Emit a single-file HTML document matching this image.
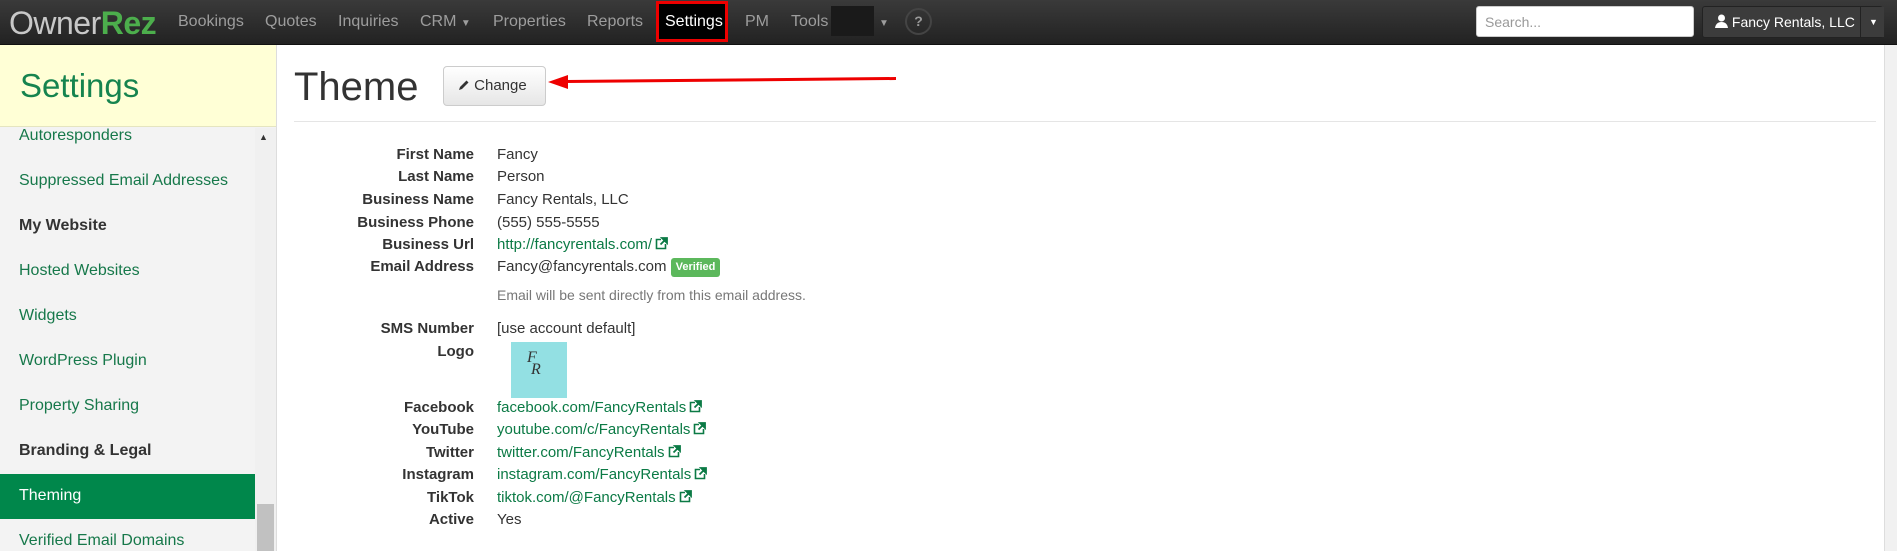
<!DOCTYPE html>
<html><head><meta charset="utf-8"><style>
*{box-sizing:border-box;margin:0;padding:0}
body{width:1897px;height:551px;overflow:hidden;font-family:"Liberation Sans",Arial,sans-serif;background:#fff;position:relative;color:#333}
.nav{position:absolute;left:0;top:0;width:1897px;height:45px;background:linear-gradient(#3a3a3a,#222);border-bottom:1px solid #111}
.abs{position:absolute}
.logo{left:9px;top:6px;font-size:32px;line-height:34px;color:#c8c8c8;font-weight:300;letter-spacing:-0.5px}
.logo b{color:#4cae4c;font-weight:700}
.ni{top:12px;font-size:16px;color:#9d9d9d;line-height:20px}
.side{left:0;top:45px;width:277px;height:506px;background:#f3f3f3;border-right:1px solid #ddd}
.shead{left:0;top:45px;width:276px;height:82px;background:#ffffd6;border-bottom:1px solid #e5e5c0}
.si{left:19px;font-size:16px;color:#16784a;line-height:20px}
.sb{font-weight:bold;color:#333}
.lab{right:1423px;font-size:15px;font-weight:bold;color:#333;line-height:20px;text-align:right;white-space:nowrap}
.val{left:497px;font-size:15px;color:#333;line-height:20px;white-space:nowrap}
.lnk{color:#0b7a45}
.ext{display:inline-block;width:13px;height:13px;vertical-align:-1px;margin-left:3px}
</style></head><body>
<div class="nav"></div>
<div class="abs logo">Owner<b>Rez</b></div>
<div class="abs ni" style="left:178px">Bookings</div>
<div class="abs ni" style="left:265px">Quotes</div>
<div class="abs ni" style="left:338px">Inquiries</div>
<div class="abs ni" style="left:420px">CRM <span style="font-size:10px">▼</span></div>
<div class="abs ni" style="left:493px">Properties</div>
<div class="abs ni" style="left:587px">Reports</div>
<div class="abs" style="left:656px;top:1px;width:72px;height:41px;background:#000;border:3px solid #e00"></div>
<div class="abs ni" style="left:665px;color:#fff">Settings</div>
<div class="abs ni" style="left:745px">PM</div>
<div class="abs ni" style="left:791px">Tools</div>
<div class="abs" style="left:831px;top:6px;width:43px;height:30px;background:#1a1a1a"></div>
<div class="abs ni" style="left:879px;font-size:10px;top:14px">▼</div>
<div class="abs" style="left:905px;top:8px;width:27px;height:27px;border:2px solid #444;border-radius:50%;color:#999;font-size:14px;font-weight:bold;text-align:center;line-height:23px">?</div>
<div class="abs" style="left:1476px;top:6px;width:218px;height:31px;background:#fff;border-radius:3px;border:1px solid #ccc;font-size:14px;color:#999;padding:7px 8px">Search...</div>
<div class="abs" style="left:1702px;top:6px;width:181px;height:32px;background:#3c3c3c;border:1px solid #222;border-radius:3px;color:#fff;font-size:14px;line-height:30px;padding-left:12px;white-space:nowrap">
<svg width="13" height="14" viewBox="0 0 13 14" style="vertical-align:-1px"><circle cx="6.5" cy="4" r="3.5" fill="#fff"/><path d="M0 14 Q1 8 6.5 8 Q12 8 13 14Z" fill="#fff"/></svg> Fancy Rentals, LLC
<div class="abs" style="left:157px;top:0;width:24px;height:30px;background:#3c3c3c;border-left:1px solid #222"></div>
<div class="abs" style="left:166px;top:0;font-size:9px">▼</div></div>
<div class="abs" style="left:1884px;top:45px;width:13px;height:506px;background:#f1f1f1;border-left:1px solid #ddd"></div>

<div class="abs side"></div>
<div class="abs shead"></div>
<div class="abs" style="left:20px;top:66px;font-size:33px;color:#16844f;line-height:40px">Settings</div>
<div class="abs" style="left:255px;top:128px;width:21px;height:423px;background:#f0f0f0"></div>
<div class="abs" style="left:259px;top:132px;font-size:9px;color:#333">▲</div>
<div class="abs" style="left:257px;top:504px;width:17px;height:47px;background:#c1c1c1"></div>
<div class="abs si" style="top:126px">Autoresponders</div>
<div class="abs si" style="top:171px">Suppressed Email Addresses</div>
<div class="abs si sb" style="top:216px">My Website</div>
<div class="abs si" style="top:261px">Hosted Websites</div>
<div class="abs si" style="top:306px">Widgets</div>
<div class="abs si" style="top:351px">WordPress Plugin</div>
<div class="abs si" style="top:396px">Property Sharing</div>
<div class="abs si sb" style="top:441px">Branding &amp; Legal</div>
<div class="abs" style="left:0;top:474px;width:255px;height:45px;background:#00874b"></div>
<div class="abs si" style="top:486px;color:#fff">Theming</div>
<div class="abs si" style="top:531px">Verified Email Domains</div>

<div class="abs" style="left:294px;top:64px;font-size:40px;color:#333;line-height:46px">Theme</div>
<div class="abs" style="left:443px;top:66px;width:103px;height:40px;background:linear-gradient(#fff,#e6e6e6);border:1px solid #ccc;border-radius:4px;font-size:15px;line-height:38px;padding-left:14px;color:#333">
<svg width="12" height="12" viewBox="0 0 12 12" style="vertical-align:-1px"><path d="M1 11 L2 8 L8.5 1.5 L10.5 3.5 L4 10 Z" fill="#333"/></svg> Change</div>
<svg class="abs" style="left:548px;top:72px" width="350" height="20"><path d="M18 9.5 L348 6.5" stroke="#e00" stroke-width="3"/><path d="M0 10 L20 3 L20 17 Z" fill="#e00"/></svg>
<div class="abs" style="left:294px;top:121px;width:1582px;height:1px;background:#e5e5e5"></div>

<div class="abs lab" style="top:145px">First Name</div><div class="abs val" style="top:145px">Fancy</div>
<div class="abs lab" style="top:167px">Last Name</div><div class="abs val" style="top:167px">Person</div>
<div class="abs lab" style="top:190px">Business Name</div><div class="abs val" style="top:190px">Fancy Rentals, LLC</div>
<div class="abs lab" style="top:213px">Business Phone</div><div class="abs val" style="top:213px">(555) 555-5555</div>
<div class="abs lab" style="top:235px">Business Url</div><div class="abs val lnk" style="top:235px">http://fancyrentals.com/<svg class="ext" viewBox="0 0 13 13"><path d="M6 2.5H1.5V11.5H10.5V7" fill="none" stroke="#0b7a45" stroke-width="1.6"/><path d="M7 1H12V6Z M11.5 1.5 L5.5 7.5" fill="#0b7a45" stroke="#0b7a45" stroke-width="1.8"/></svg></div>
<div class="abs lab" style="top:257px">Email Address</div><div class="abs val" style="top:257px">Fancy@fancyrentals.com <span style="display:inline-block;background:#5cb85c;color:#fff;font-size:11px;font-weight:bold;border-radius:3px;padding:0 5px;line-height:19px;vertical-align:1px">Verified</span></div>
<div class="abs val" style="top:285px;font-size:14px;color:#777">Email will be sent directly from this email address.</div>
<div class="abs lab" style="top:319px">SMS Number</div><div class="abs val" style="top:319px">[use account default]</div>
<div class="abs lab" style="top:342px">Logo</div>
<div class="abs" style="left:511px;top:342px;width:56px;height:56px;background:#93e0e3;font-family:'Liberation Serif',serif;font-style:italic;font-size:16px;color:#333;padding:10px 0 0 16px;line-height:12px">F<br>&nbsp;R</div>
<div class="abs lab" style="top:398px">Facebook</div><div class="abs val lnk" style="top:398px">facebook.com/FancyRentals<svg class="ext" viewBox="0 0 13 13"><path d="M6 2.5H1.5V11.5H10.5V7" fill="none" stroke="#0b7a45" stroke-width="1.6"/><path d="M7 1H12V6Z M11.5 1.5 L5.5 7.5" fill="#0b7a45" stroke="#0b7a45" stroke-width="1.8"/></svg></div>
<div class="abs lab" style="top:420px">YouTube</div><div class="abs val lnk" style="top:420px">youtube.com/c/FancyRentals<svg class="ext" viewBox="0 0 13 13"><path d="M6 2.5H1.5V11.5H10.5V7" fill="none" stroke="#0b7a45" stroke-width="1.6"/><path d="M7 1H12V6Z M11.5 1.5 L5.5 7.5" fill="#0b7a45" stroke="#0b7a45" stroke-width="1.8"/></svg></div>
<div class="abs lab" style="top:443px">Twitter</div><div class="abs val lnk" style="top:443px">twitter.com/FancyRentals<svg class="ext" viewBox="0 0 13 13"><path d="M6 2.5H1.5V11.5H10.5V7" fill="none" stroke="#0b7a45" stroke-width="1.6"/><path d="M7 1H12V6Z M11.5 1.5 L5.5 7.5" fill="#0b7a45" stroke="#0b7a45" stroke-width="1.8"/></svg></div>
<div class="abs lab" style="top:465px">Instagram</div><div class="abs val lnk" style="top:465px">instagram.com/FancyRentals<svg class="ext" viewBox="0 0 13 13"><path d="M6 2.5H1.5V11.5H10.5V7" fill="none" stroke="#0b7a45" stroke-width="1.6"/><path d="M7 1H12V6Z M11.5 1.5 L5.5 7.5" fill="#0b7a45" stroke="#0b7a45" stroke-width="1.8"/></svg></div>
<div class="abs lab" style="top:488px">TikTok</div><div class="abs val lnk" style="top:488px">tiktok.com/@FancyRentals<svg class="ext" viewBox="0 0 13 13"><path d="M6 2.5H1.5V11.5H10.5V7" fill="none" stroke="#0b7a45" stroke-width="1.6"/><path d="M7 1H12V6Z M11.5 1.5 L5.5 7.5" fill="#0b7a45" stroke="#0b7a45" stroke-width="1.8"/></svg></div>
<div class="abs lab" style="top:510px">Active</div><div class="abs val" style="top:510px">Yes</div>
</body></html>
